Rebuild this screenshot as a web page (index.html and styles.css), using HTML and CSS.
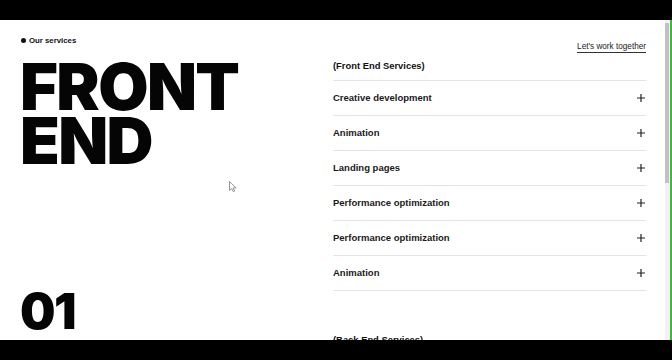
FILE: index.html
```html
<!DOCTYPE html>
<html lang="en">
<head>
    <meta charset="UTF-8">
    <meta name="viewport" content="width=device-width, initial-scale=1.0">
    <title>Our services</title>
    <link rel="stylesheet" href="styles.css">
</head>
<body>
    <div class="bar"></div>
    <div class="viewport">
        <div class="page">
            <div class="intro">
                <div class="label"><span class="dot"></span>Our services</div>
                <h1 class="title">FRONT<br>END</h1>
                <div class="number">01</div>
            </div>

            <div class="services">
                <div class="cta"><a href="#">Let's work together</a></div>

                <h2 class="group">(Front End Services)</h2>
                <ul class="list">
                    <li class="item">Creative development <svg class="plus" viewBox="0 0 8 8"><path d="M4 0v8M0 4h8"/></svg></li>
                    <li class="item">Animation <svg class="plus" viewBox="0 0 8 8"><path d="M4 0v8M0 4h8"/></svg></li>
                    <li class="item">Landing pages <svg class="plus" viewBox="0 0 8 8"><path d="M4 0v8M0 4h8"/></svg></li>
                    <li class="item">Performance optimization <svg class="plus" viewBox="0 0 8 8"><path d="M4 0v8M0 4h8"/></svg></li>
                    <li class="item">Performance optimization <svg class="plus" viewBox="0 0 8 8"><path d="M4 0v8M0 4h8"/></svg></li>
                    <li class="item">Animation <svg class="plus" viewBox="0 0 8 8"><path d="M4 0v8M0 4h8"/></svg></li>
                </ul>

                <h2 class="group group-next">(Back End Services)</h2>
            </div>

            <svg class="cursor" viewBox="0 0 8 11"><path d="M0.5 0.5v9l2.2-2 1.6 3.2 1.4-0.7-1.6-3.1h3z"/></svg>
        </div>
        <div class="scrollbar"><div class="thumb"></div></div>
    </div>
    <div class="bar"></div>
</body>
</html>
```

FILE: styles.css
```css
body {
    margin: 0;
    background: #000;
    color: #111;
    font-family: "Liberation Sans", Arial, sans-serif;
    overflow: hidden;
}
.bar {
    height: 20px;
    background: #000;
}
.viewport {
    display: flex;
    height: 320px;
    background: #fff;
    overflow: hidden;
}
.page {
    position: relative;
    flex: 1;
    display: grid;
    grid-template-columns: 1fr 1fr;
    padding: 15px 19px 0 20px;
}
.intro {
    display: flex;
    flex-direction: column;
    height: 301px;
}
.label {
    display: flex;
    align-items: center;
    gap: 3px;
    height: 10px;
    font-size: 7.8px;
    font-weight: bold;
}
.dot {
    width: 5px;
    height: 5px;
    margin-left: 1px;
    border-radius: 50%;
    background: #111;
}
.title {
    margin: 15px 0 0;
    font-family: Inter, "Liberation Sans", sans-serif;
    font-weight: 900;
    font-size: 65px;
    line-height: 0.83;
    letter-spacing: -0.025em;
    color: #050505;
}
.number {
    margin-top: auto;
    font-family: Inter, "Liberation Sans", sans-serif;
    font-weight: 900;
    font-size: 50px;
    line-height: 1;
    letter-spacing: -0.03em;
    color: #050505;
}
.services {
    display: flex;
    flex-direction: column;
}
.cta {
    height: 12px;
    text-align: right;
}
.cta a {
    display: inline-block;
    font-size: 8.2px;
    line-height: 10px;
    color: #222;
    text-decoration: none;
    border-bottom: 1px solid #333;
}
.group {
    margin: 0;
    padding: 13px 0 8px;
    font-size: 9.4px;
    line-height: 12px;
    border-bottom: 1px solid #e4e4e4;
}
.group-next {
    margin-top: 30px;
    border-bottom: none;
}
.list {
    list-style: none;
    margin: 0;
    padding: 0;
}
.item {
    display: flex;
    justify-content: space-between;
    align-items: center;
    height: 33px;
    padding-bottom: 1px;
    font-size: 9.5px;
    font-weight: bold;
    color: #1a1a1a;
    border-bottom: 1px solid #e4e4e4;
}
.plus {
    width: 8px;
    height: 8px;
    margin-right: 1px;
    stroke: #222;
    stroke-width: 1.2;
    fill: none;
}
.cursor {
    position: absolute;
    left: 229px;
    top: 161px;
    width: 8px;
    height: 11px;
    fill: #fff;
    stroke: #888;
    stroke-width: 0.9;
}
.scrollbar {
    width: 5px;
    background: #f6f0f6;
    border-right: 2px solid #2fc42f;
    padding-top: 3px;
}
.thumb {
    height: 160px;
    margin: 0 1px 0 0;
    background: #c3c0c3;
}
```
